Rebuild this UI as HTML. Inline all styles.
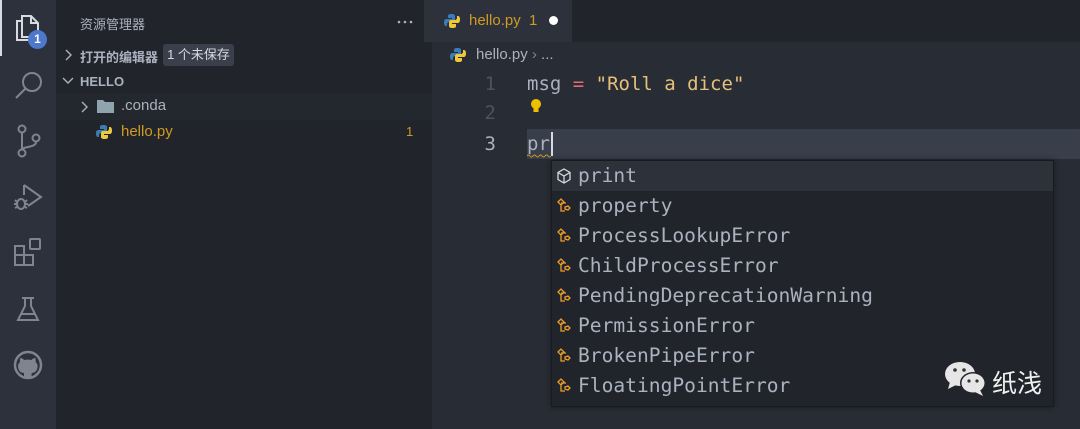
<!DOCTYPE html>
<html><head><meta charset="utf-8"><style>
*{margin:0;padding:0;box-sizing:border-box}
body{width:1080px;height:429px;overflow:hidden;background:#282c34;font-family:"Liberation Sans","Noto Sans CJK SC",sans-serif;position:relative}
.abs{position:absolute}
#act{left:0;top:0;width:56px;height:429px;background:#2c313c}
#side{left:56px;top:0;width:376px;height:429px;background:#21252b}
#tabs{left:432px;top:0;width:648px;height:42px;background:#21252b}
#tab{left:432px;top:0;width:140px;height:42px;background:#2c313c}
.mono{font-family:"DejaVu Sans Mono","Liberation Mono",monospace}
.ln{font-size:19px;color:#4b5263;width:60px;text-align:right;left:436px}
.code{left:527px;font-size:19px;color:#abb2bf;white-space:pre}
#sug{left:551px;top:160px;width:503px;height:247px;background:#21252b;border:1px solid #181a1f;box-shadow:0 0 6px #0006}
.row{position:absolute;left:0;width:501px;height:30px;font-size:19.6px;color:#abb2bf;line-height:30px;padding-left:26px}
.ic{position:absolute;left:4px;top:7px}
</style></head><body>
<div id="act" class="abs">
 <div class="abs" style="left:0;top:0;width:2px;height:56px;background:#d7dae0"></div>
 <svg class="abs" style="left:14px;top:12px" width="28" height="30" viewBox="0 0 28 30" fill="none" stroke="#d7dae0" stroke-width="2"><path d="M8 4h9l7 7v14H8z"/><path d="M17 4v7h7"/><path d="M8 9H3v19h14v-3"/></svg>
 <div class="abs" style="left:28px;top:30px;width:19px;height:19px;border-radius:50%;background:#4d78cc;color:#fff;font-size:12px;font-weight:bold;text-align:center;line-height:19px">1</div>
 <svg class="abs" style="left:14px;top:70px" width="30" height="30" fill="none" stroke="#7f848e" stroke-width="2"><circle cx="18" cy="12" r="9"/><path d="M11 19 2 28"/></svg>
 <svg class="abs" style="left:14px;top:124px" width="28" height="34" fill="none" stroke="#7f848e" stroke-width="2"><circle cx="8" cy="5" r="3.5"/><circle cx="8" cy="29" r="3.5"/><circle cx="22" cy="14" r="3.5"/><path d="M8 9v16M22 18c0 6-14 4-14 8"/></svg>
 <svg class="abs" style="left:12px;top:182px" width="32" height="32" fill="none" stroke="#7f848e" stroke-width="2"><path d="M12 3v10M12 3l17 12-13 9"/><ellipse cx="9" cy="22" rx="4" ry="5"/><path d="M3 18l2 2M3 26l2-1M15 18l-2 2M15 26l-2-1M2 22h3M13 22h3"/></svg>
 <svg class="abs" style="left:13px;top:238px" width="30" height="30" fill="none" stroke="#7f848e" stroke-width="2"><rect x="2" y="8" width="9" height="9"/><rect x="2" y="17" width="9" height="10"/><rect x="11" y="17" width="9" height="10"/><rect x="17" y="1" width="10" height="10" rx="1"/></svg>
 <svg class="abs" style="left:16px;top:296px" width="26" height="28" fill="none" stroke="#7f848e" stroke-width="2"><path d="M6 2h12M9 2v8L2 24h20L15 10V2M5 18h14"/></svg>
 <svg class="abs" style="left:13px;top:350px" width="30" height="30" viewBox="0 0 30 30"><circle cx="15" cy="15" r="13" fill="none" stroke="#7f848e" stroke-width="2.5"/><path d="M11 27v-4c-3 0-6-2-6-7 0-2 1-3 2-4 0-1-.3-2.5.3-4 1.5 0 3 1 4 2 2-.5 5-.5 7 0 1-1 2.5-2 4-2 .5 1.5.3 3 .3 4 1 1 2 2 2 4 0 5-3 7-6 7v4z" fill="#7f848e"/></svg>
</div>
<div id="side" class="abs">
 <div class="abs" style="left:24px;top:14px;font-size:13px;color:#abb2bf">资源管理器</div>
 <svg class="abs" style="left:341px;top:20px" width="16" height="4"><circle cx="2" cy="2" r="1.3" fill="#abb2bf"/><circle cx="8" cy="2" r="1.3" fill="#abb2bf"/><circle cx="14" cy="2" r="1.3" fill="#abb2bf"/></svg>
 <svg class="abs" style="left:8px;top:49px" width="8" height="12" fill="none" stroke="#abb2bf" stroke-width="1.4"><path d="M2 1l5 5-5 5"/></svg>
 <div class="abs" style="left:24px;top:47px;font-size:13px;font-weight:bold;color:#abb2bf">打开的编辑器</div>
 <div class="abs" style="left:107px;top:44px;width:71px;height:22px;background:#3a3f4b;border-radius:3px;color:#d7dae0;font-size:13px;line-height:22px;text-align:center">1 个未保存</div>
 <svg class="abs" style="left:6px;top:76px" width="12" height="8" fill="none" stroke="#abb2bf" stroke-width="1.4"><path d="M1 2l5 5 5-5"/></svg>
 <div class="abs" style="left:24px;top:74px;font-size:13px;font-weight:bold;color:#abb2bf">HELLO</div>
 <div class="abs" style="left:0;top:94px;width:376px;height:26px;background:#23272e"></div>
 <svg class="abs" style="left:24px;top:101px" width="8" height="12" fill="none" stroke="#abb2bf" stroke-width="1.4"><path d="M2 1l5 5-5 5"/></svg>
 <svg class="abs" style="left:41px;top:99px" width="17" height="14"><path d="M0 1h6l2 2h9v11H0z" fill="#90a4ae"/></svg>
 <div class="abs" style="left:65px;top:97px;font-size:15px;color:#abb2bf">.conda</div>
 <svg class="abs" style="left:40px;top:124px" width="16" height="16" viewBox="0 0 16 16"><path d="M8 1C4 1 4 2 4 3v2h4v1H2C1 6 0 7 0 9.5S1 13 2 13h1v-2c0-1 1-2 2-2h4c1 0 2-1 2-2V3c0-1-1-2-3-2z" fill="#3d7ab8"/><path d="M8 15c4 0 4-1 4-2v-2H8v-1h6c1 0 2-1 2-3.5S15 3 14 3h-1v2c0 1-1 2-2 2H7c-1 0-2 1-2 2v4c0 1 1 2 3 2z" fill="#f0c93a"/></svg>
 <div class="abs" style="left:65px;top:123px;font-size:15px;color:#d19a22">hello.py</div>
 <div class="abs" style="left:350px;top:124px;font-size:13px;color:#d19a22">1</div>
 <div class="abs" style="left:368px;top:0;width:8px;height:42px;background:#2c313a"></div>
</div>
<div id="tabs" class="abs"></div>
<div id="tab" class="abs">
 <svg class="abs" style="left:12px;top:13px" width="16" height="16" viewBox="0 0 16 16"><path d="M8 1C4 1 4 2 4 3v2h4v1H2C1 6 0 7 0 9.5S1 13 2 13h1v-2c0-1 1-2 2-2h4c1 0 2-1 2-2V3c0-1-1-2-3-2z" fill="#3d7ab8"/><path d="M8 15c4 0 4-1 4-2v-2H8v-1h6c1 0 2-1 2-3.5S15 3 14 3h-1v2c0 1-1 2-2 2H7c-1 0-2 1-2 2v4c0 1 1 2 3 2z" fill="#f0c93a"/></svg>
 <div class="abs" style="left:37px;top:12px;font-size:15px;color:#d19a22">hello.py&nbsp;&nbsp;1</div>
 <div class="abs" style="left:117px;top:16px;width:9px;height:9px;border-radius:50%;background:#fff"></div>
</div>
<svg class="abs" style="left:450px;top:47px" width="16" height="16" viewBox="0 0 16 16"><path d="M8 1C4 1 4 2 4 3v2h4v1H2C1 6 0 7 0 9.5S1 13 2 13h1v-2c0-1 1-2 2-2h4c1 0 2-1 2-2V3c0-1-1-2-3-2z" fill="#3d7ab8"/><path d="M8 15c4 0 4-1 4-2v-2H8v-1h6c1 0 2-1 2-3.5S15 3 14 3h-1v2c0 1-1 2-2 2H7c-1 0-2 1-2 2v4c0 1 1 2 3 2z" fill="#f0c93a"/></svg>
<div class="abs" style="left:476px;top:46px;font-size:15px;color:#abb2bf">hello.py <span style="color:#7f848e">›</span> ...</div>
<div class="abs" style="left:527px;top:129px;width:553px;height:30px;background:#383e4a"></div>
<div class="abs mono ln" style="top:73px">1</div>
<div class="abs mono ln" style="top:102px">2</div>
<div class="abs mono ln" style="top:133px;color:#abb2bf">3</div>
<div class="abs mono code" style="top:73px">msg <span style="color:#e06c75">=</span> <span style="color:#e5c07b">"Roll a dice"</span></div>
<svg class="abs" style="left:530px;top:98px" width="12" height="16"><circle cx="6" cy="6" r="5" fill="#f0c000"/><rect x="3.5" y="10" width="5" height="4" fill="#f0c000"/></svg>
<div class="abs mono code" style="top:133px">pr</div>
<div class="abs" style="left:551px;top:132px;width:2px;height:24px;background:#d7dae0"></div>
<svg class="abs" style="left:527px;top:154px" width="24" height="4"><path d="M0 2q1.5-2 3 0t3 0 3 0 3 0 3 0 3 0 3 0 3 0" stroke="#d19a22" fill="none" stroke-width="1"/></svg>
<div id="sug" class="abs mono">
 <div class="row" style="top:0;background:#2c313a"><svg class="ic" width="16" height="16" fill="none" stroke="#d7dae0" stroke-width="1.3"><path d="M8 1l6 3.5v7L8 15l-6-3.5v-7z M2 4.5 8 8l6-3.5M8 8v7"/></svg>print</div>
 <div class="row" style="top:30px"><svg class="ic" width="16" height="16" fill="none" stroke="#ee9d28" stroke-width="1.3"><path d="M2 4l3-3 3 3-3 3zM5 7v6h4M9 9l3-1 2 2-2 2-3-1zM5 5h5"/></svg>property</div>
 <div class="row" style="top:60px"><svg class="ic" width="16" height="16" fill="none" stroke="#ee9d28" stroke-width="1.3"><path d="M2 4l3-3 3 3-3 3zM5 7v6h4M9 9l3-1 2 2-2 2-3-1zM5 5h5"/></svg>ProcessLookupError</div>
 <div class="row" style="top:90px"><svg class="ic" width="16" height="16" fill="none" stroke="#ee9d28" stroke-width="1.3"><path d="M2 4l3-3 3 3-3 3zM5 7v6h4M9 9l3-1 2 2-2 2-3-1zM5 5h5"/></svg>ChildProcessError</div>
 <div class="row" style="top:120px"><svg class="ic" width="16" height="16" fill="none" stroke="#ee9d28" stroke-width="1.3"><path d="M2 4l3-3 3 3-3 3zM5 7v6h4M9 9l3-1 2 2-2 2-3-1zM5 5h5"/></svg>PendingDeprecationWarning</div>
 <div class="row" style="top:150px"><svg class="ic" width="16" height="16" fill="none" stroke="#ee9d28" stroke-width="1.3"><path d="M2 4l3-3 3 3-3 3zM5 7v6h4M9 9l3-1 2 2-2 2-3-1zM5 5h5"/></svg>PermissionError</div>
 <div class="row" style="top:180px"><svg class="ic" width="16" height="16" fill="none" stroke="#ee9d28" stroke-width="1.3"><path d="M2 4l3-3 3 3-3 3zM5 7v6h4M9 9l3-1 2 2-2 2-3-1zM5 5h5"/></svg>BrokenPipeError</div>
 <div class="row" style="top:210px"><svg class="ic" width="16" height="16" fill="none" stroke="#ee9d28" stroke-width="1.3"><path d="M2 4l3-3 3 3-3 3zM5 7v6h4M9 9l3-1 2 2-2 2-3-1zM5 5h5"/></svg>FloatingPointError</div>
</div>
<svg class="abs" style="left:944px;top:360px" width="44" height="38" viewBox="0 0 44 38"><ellipse cx="16" cy="14" rx="15" ry="12" fill="#e6e6e6"/><path d="M6 22l-2 7 8-4z" fill="#e6e6e6"/><ellipse cx="29" cy="23" rx="13" ry="11" fill="#21252b"/><ellipse cx="29" cy="23" rx="11.5" ry="9.5" fill="#e6e6e6"/><path d="M36 30l3 6-8-4z" fill="#e6e6e6"/><circle cx="11" cy="10" r="1.8" fill="#333"/><circle cx="20" cy="10" r="1.8" fill="#333"/><circle cx="25" cy="21" r="1.6" fill="#333"/><circle cx="33" cy="21" r="1.6" fill="#333"/></svg>
<div class="abs" style="left:992px;top:364px;font-size:25px;color:#f0f0f0">纸浅</div>
</body></html>
